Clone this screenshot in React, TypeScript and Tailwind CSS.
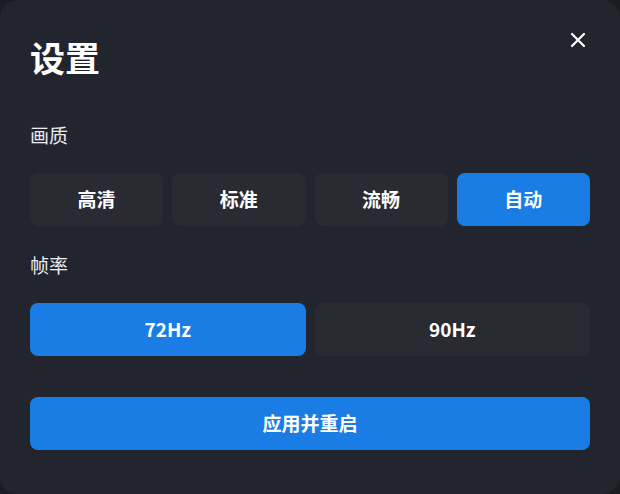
import { useState } from "react";

const FONT = { fontFamily: '"Noto Sans CJK SC", "Noto Sans", sans-serif' };

const qualities = ["高清", "标准", "流畅", "自动"];
const rates = ["72Hz", "90Hz"];

function Option({
  label,
  active,
  onClick,
}: {
  label: string;
  active: boolean;
  onClick: () => void;
}) {
  return (
    <button
      onClick={onClick}
      className={
        "h-[53px] rounded-[8px] text-[19px] font-bold text-white " +
        (active ? "bg-[#1a7de6]" : "bg-[#2a2a33]")
      }
    >
      {label}
    </button>
  );
}

export default function App() {
  const [quality, setQuality] = useState("自动");
  const [rate, setRate] = useState("72Hz");

  return (
    <div className="w-[620px] h-[494px] bg-[#1b1c21]" style={FONT}>
      <div className="relative h-full rounded-[18px] bg-[#22252d] px-[30px] pt-[33px]">
        <button className="absolute right-[35px] top-[33px] text-white" title="关闭">
          <svg width="14" height="14" viewBox="0 0 14 14" fill="none">
            <path d="M1 1L13 13M13 1L1 13" stroke="currentColor" strokeWidth="2.2" strokeLinecap="square" />
          </svg>
        </button>

        <h1 className="text-[35px] leading-[48px] font-bold text-white">设置</h1>

        <div className="mt-[41px] text-[19px] leading-[26px] text-[#eceef1]">画质</div>
        <div className="mt-[25px] grid grid-cols-4 gap-[9px]">
          {qualities.map((q) => (
            <Option key={q} label={q} active={quality === q} onClick={() => setQuality(q)} />
          ))}
        </div>

        <div className="mt-[26px] text-[19px] leading-[26px] text-[#eceef1]">帧率</div>
        <div className="mt-[25px] grid grid-cols-2 gap-[9px]">
          {rates.map((r) => (
            <Option key={r} label={r} active={rate === r} onClick={() => setRate(r)} />
          ))}
        </div>

        <button className="mt-[41px] h-[53px] w-full rounded-[8px] bg-[#1a7de6] text-[19px] font-bold text-white">
          应用并重启
        </button>
      </div>
    </div>
  );
}
